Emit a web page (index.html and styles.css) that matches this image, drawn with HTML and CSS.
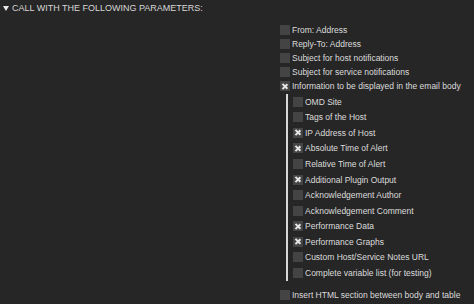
FILE: index.html
```html
<!DOCTYPE html>
<html lang="en">
<head>
  <meta charset="UTF-8" />
  <title>Notification parameters</title>
  <link rel="stylesheet" href="styles.css">
</head>
<body>
  <div class="section">
    <div class="section-title">
      <span class="arrow"></span>
      <span>Call with the following parameters:</span>
    </div>

    <div class="params">
      <label class="row"><span class="box"></span>From: Address</label>
      <label class="row"><span class="box"></span>Reply-To: Address</label>
      <label class="row"><span class="box"></span>Subject for host notifications</label>
      <label class="row"><span class="box"></span>Subject for service notifications</label>
      <label class="row"><span class="box checked"></span>Information to be displayed in the email body</label>

      <div class="nested">
        <label class="row"><span class="box"></span>OMD Site</label>
        <label class="row"><span class="box"></span>Tags of the Host</label>
        <label class="row"><span class="box checked"></span>IP Address of Host</label>
        <label class="row"><span class="box checked"></span>Absolute Time of Alert</label>
        <label class="row"><span class="box"></span>Relative Time of Alert</label>
        <label class="row"><span class="box checked"></span>Additional Plugin Output</label>
        <label class="row"><span class="box"></span>Acknowledgement Author</label>
        <label class="row"><span class="box"></span>Acknowledgement Comment</label>
        <label class="row"><span class="box checked"></span>Performance Data</label>
        <label class="row"><span class="box checked"></span>Performance Graphs</label>
        <label class="row"><span class="box"></span>Custom Host/Service Notes URL</label>
        <label class="row"><span class="box"></span>Complete variable list (for testing)</label>
      </div>

      <label class="row last"><span class="box"></span>Insert HTML section between body and table</label>
    </div>
  </div>
</body>
</html>
```

FILE: styles.css
```css
body {
  margin: 0;
  background: #262626;
  color: #dcdcdc;
  font-family: "Liberation Sans", Arial, sans-serif;
  font-size: 8.5px;
  height: 304px;
  overflow: hidden;
}

.section {
  padding: 2px 0 0 3px;
}

.section-title {
  display: flex;
  align-items: center;
  gap: 3px;
  height: 12px;
  font-size: 9px;
  text-transform: uppercase;
  color: #d6d6d6;
}

.arrow {
  width: 0;
  height: 0;
  border-left: 3px solid transparent;
  border-right: 3px solid transparent;
  border-top: 5px solid #e8e8e8;
  margin-top: 1px;
}

.params {
  margin: 9px 0 0 277px;
  display: flex;
  flex-direction: column;
}

.row {
  display: flex;
  align-items: center;
  gap: 2px;
  height: 14px;
  white-space: nowrap;
}

.box {
  position: relative;
  width: 10px;
  height: 10px;
  background: #444;
  flex: none;
}

.box.checked::before,
.box.checked::after {
  content: "";
  position: absolute;
  left: 4.25px;
  top: 1.5px;
  width: 1.5px;
  height: 7px;
  background: #e6e6e6;
  transform: rotate(45deg);
}

.box.checked::after {
  transform: rotate(-45deg);
}

.nested {
  margin: 1px 0 0 6px;
  padding-left: 5px;
  border-left: 2px solid #d8d8d8;
  display: flex;
  flex-direction: column;
}

.nested .row {
  height: 15.55px;
}

.row.last {
  margin-top: 7px;
}
```
